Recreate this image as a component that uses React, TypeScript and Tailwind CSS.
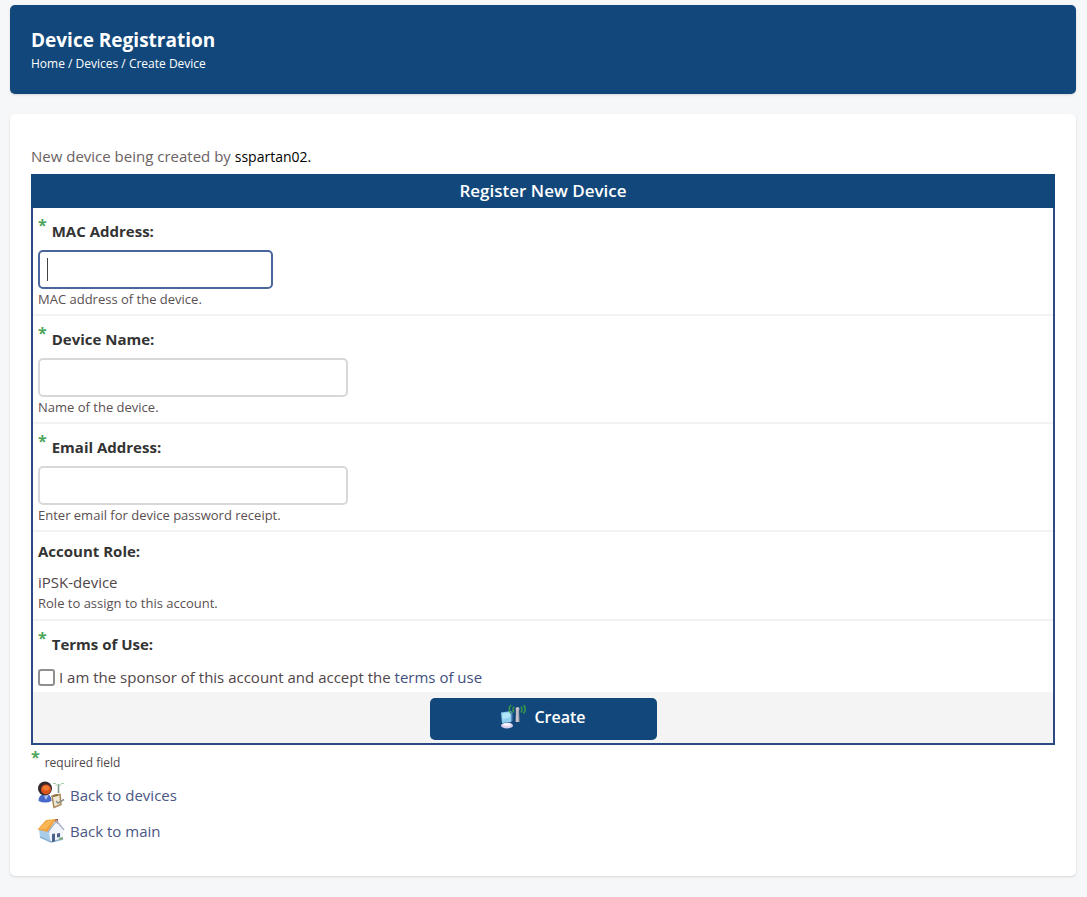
import type { ReactNode } from "react";

function RequiredMark() {
  return (
    <span className="mr-[5px] -mt-0.5 self-start text-base leading-4 font-bold text-[#4fa65a]" aria-hidden="true">
      *
    </span>
  );
}

interface FieldRowProps {
  id: string;
  label: string;
  hint: string;
  children: ReactNode;
}

function FieldRow({ id, label, hint, children }: FieldRowProps) {
  return (
    <div className="border-b-2 border-[#f2f2f4] px-[5px] pt-[11px] pb-[5px]">
      <div className="flex h-6 items-center">
        <RequiredMark />
        <label htmlFor={id} className="text-[15px] font-bold text-[#333]">
          {label}
        </label>
      </div>
      <div className="mt-[7px]">{children}</div>
      <p className="text-[13px] leading-5 text-[#5a5052]">{hint}</p>
    </div>
  );
}

function AntennaIcon() {
  return (
    <svg width="26" height="26" viewBox="0 0 26 26" aria-hidden="true">
      <ellipse cx="7" cy="21.5" rx="6" ry="3" fill="#d9cfee" />
      <ellipse cx="7" cy="20.5" rx="4" ry="1.6" fill="#f5f0fb" />
      <path d="M1 8.5 11 7v11L2 19z" fill="#8fcff0" />
      <path d="M2.5 9.5 10 8.500v5L2.500 15z" fill="#b4e4f8" />
      <path d="m11 7 1.500 1v9L11 18z" fill="#5a8fbd" />
      <path d="M16 5h3l.5 13h-4z" fill="#aaa6b0" />
      <path d="M16.500 6h1l.3 12h-1.500z" fill="#d6d2da" />
      <circle cx="17.500" cy="5" r="2" fill="#c6bdc8" />
      <path
        d="M14 2.500q-2 3 0 6M11 1q-3.500 4 0 8.500M21 2.500q2 3 0 6M23.500 1q3.500 4 0 8.500"
        fill="none"
        stroke="#37994c"
        strokeWidth="1.500"
      />
    </svg>
  );
}

function DevicesIcon() {
  return (
    <svg width="28" height="28" viewBox="0 0 28 28" aria-hidden="true">
      <path d="M1.500 20q0-7 7-7 6 0 6 7-6 3-13 0z" fill="#4568ca" />
      <path d="m6.500 14 2.500 5 2.500-5z" fill="#a9c4f5" />
      <circle cx="8" cy="7.500" r="7" fill="#33292e" />
      <circle cx="9" cy="8.500" r="5" fill="#d9541d" />
      <ellipse cx="9" cy="7" rx="3.500" ry="2.500" fill="#f07a31" />
      <path d="M21.500 3v9" stroke="#7b8f87" strokeWidth="1.500" />
      <path d="M16 2.500h3M24 2.500h3M18.500 4h6" stroke="#a9d0ad" strokeWidth="1" />
      <path d="m15 15 8-1.500 1 10-7 3z" fill="#efe9d5" stroke="#a98b58" strokeWidth="1.500" />
      <path d="m16 14 5-1v2l-5 1z" fill="#8c6e3b" />
      <path d="m19 20 2 2 6-3.500" fill="none" stroke="#8a9188" strokeWidth="1.500" />
    </svg>
  );
}

function HomeIcon() {
  return (
    <svg width="28" height="26" viewBox="0 0 28 26" aria-hidden="true">
      <path d="m2 11 12 3v10L3 19z" fill="#a9cce9" />
      <path d="m12 15 8-10 6 8v9l-12 3z" fill="#f1f5fb" />
      <path d="m3 19 11 5 12-3" fill="none" stroke="#8bb2d2" strokeWidth="1.500" />
      <path d="m17 3 1-2h3v5z" fill="#a9563b" />
      <path d="M.500 11.500 9 2l10-1-8 13z" fill="#efa43d" />
      <path d="M2 11 10 3l6-1-7 9z" fill="#f9b855" />
      <path d="m11 14 8.500-11L27 12" fill="none" stroke="#aab3c6" strokeWidth="1.500" />
      <path d="m15 16 3-.5v8l-3 .6zM20 15.500l3-.5v4l-3 .5z" fill="#4c608c" />
      <path d="m22 21 4-1" stroke="#81ac79" strokeWidth="2" />
    </svg>
  );
}

const inputClass = "h-[39px] rounded-[5px] border-2 bg-white px-2 text-sm text-[#333] outline-none";

export default function App() {
  return (
    <div className="min-h-screen bg-[#f6f7f9] px-2.5 pt-[5px] pb-5 font-['Open_Sans','Noto_Sans',sans-serif] text-[#333]">
      <header className="mr-px h-[89px] rounded-[5px] bg-[#12477b] px-[21px] pt-[21px] text-white shadow-sm">
        <h1 className="text-[19px] leading-7 font-bold">Device Registration</h1>
        <nav aria-label="Breadcrumb" className="text-xs leading-5 font-medium">
          <a href="#home">Home</a> / <a href="#devices">Devices</a> / <span>Create Device</span>
        </nav>
      </header>

      <main className="mt-5 mr-px rounded-[5px] bg-white px-[21px] pt-[30px] pb-[27px] shadow-sm">
        <p className="text-[15px] leading-6 text-[#6b6264]">
          New device being created by <span className="text-sm font-medium text-black">sspartan02.</span>
        </p>

        <form className="mt-1.5 border-2 border-[#2b4a83]" onSubmit={(e) => e.preventDefault()}>
          <h2 className="-mx-0.5 -mt-0.5 bg-[#12477b] text-center text-[17px] leading-[34px] font-semibold text-white">
            Register New Device
          </h2>

          <FieldRow id="mac" label="MAC Address:" hint="MAC address of the device.">
            <div className="relative w-[235px]">
              <input id="mac" type="text" required className={`${inputClass} block w-full border-[#4a669c] caret-transparent`} />
              <span className="absolute top-2 left-[9px] h-[23px] w-px bg-[#444]" />
            </div>
          </FieldRow>
          <FieldRow id="name" label="Device Name:" hint="Name of the device.">
            <input id="name" type="text" required className={`${inputClass} block w-[310px] border-[#d8d8d8]`} />
          </FieldRow>
          <FieldRow id="email" label="Email Address:" hint="Enter email for device password receipt.">
            <input id="email" type="email" required className={`${inputClass} block w-[310px] border-[#d8d8d8]`} />
          </FieldRow>

          <div className="border-b-2 border-[#f2f2f4] px-[5px] pt-[7px] pb-1.5">
            <h3 className="text-[15px] leading-6 font-bold">Account Role:</h3>
            <p className="mt-2 text-[15px] leading-[22px] text-[#4f4649]">iPSK-device</p>
            <p className="text-[13px] leading-5 text-[#5a5052]">Role to assign to this account.</p>
          </div>

          <div className="px-[5px] pt-[11px] pb-[3px]">
            <div className="flex h-6 items-center">
              <RequiredMark />
              <h3 className="text-[15px] font-bold">Terms of Use:</h3>
            </div>
            <div className="mt-[9px] flex h-6 items-center gap-1 text-[15px] text-[#4f4649]">
              <input
                id="terms"
                type="checkbox"
                required
                className="size-[17px] appearance-none rounded-[3px] border-2 border-[#8f8f8f] bg-white checked:bg-[#12477b]"
              />
              <span>
                <label htmlFor="terms">I am the sponsor of this account and accept the</label>{" "}
                <a href="#terms" className="text-[#3f4f80]">
                  terms of use
                </a>
              </span>
            </div>
          </div>

          <div className="flex justify-center bg-[#f4f4f4] pt-1.5 pb-[3px]">
            <button
              type="submit"
              className="flex h-[42px] w-[227px] items-center justify-center gap-2 rounded-[5px] bg-[#12477b] pb-1 text-base font-semibold text-white"
            >
              <AntennaIcon />
              Create
            </button>
          </div>
        </form>

        <div className="mt-1.5 flex h-6 items-center">
          <RequiredMark />
          <span className="text-xs text-[#4f4649]">required field</span>
        </div>

        <ul className="mt-0.5 pl-1.5 text-[15px] text-[#4a5683]">
          <li className="flex h-9 items-center">
            <a href="#devices" className="flex items-center gap-[5px]">
              <DevicesIcon />
              Back to devices
            </a>
          </li>
          <li className="flex h-9 items-center">
            <a href="#main" className="flex items-center gap-[5px]">
              <HomeIcon />
              Back to main
            </a>
          </li>
        </ul>
      </main>
    </div>
  );
}
